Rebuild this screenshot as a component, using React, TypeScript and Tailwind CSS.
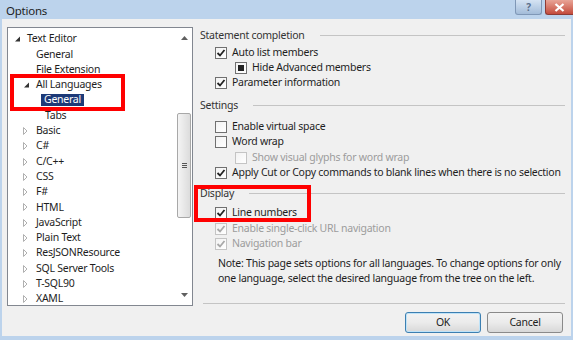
import React from 'react';

const font = "font-['Noto_Sans',sans-serif]";

type TreeNode = {
  label: string;
  pad: string;
  arrow?: 'open' | 'closed';
  selected?: boolean;
};

const tree: TreeNode[] = [
  { label: 'Text Editor', pad: 'pl-[6px]', arrow: 'open' },
  { label: 'General', pad: 'pl-[28px]' },
  { label: 'File Extension', pad: 'pl-[28px]' },
  { label: 'All Languages', pad: 'pl-[15px]', arrow: 'open' },
  { label: 'General', pad: 'pl-[33px]', selected: true },
  { label: 'Tabs', pad: 'pl-[37px]' },
  { label: 'Basic', pad: 'pl-[15px]', arrow: 'closed' },
  { label: 'C#', pad: 'pl-[15px]', arrow: 'closed' },
  { label: 'C/C++', pad: 'pl-[15px]', arrow: 'closed' },
  { label: 'CSS', pad: 'pl-[15px]', arrow: 'closed' },
  { label: 'F#', pad: 'pl-[15px]', arrow: 'closed' },
  { label: 'HTML', pad: 'pl-[15px]', arrow: 'closed' },
  { label: 'JavaScript', pad: 'pl-[15px]', arrow: 'closed' },
  { label: 'Plain Text', pad: 'pl-[15px]', arrow: 'closed' },
  { label: 'ResJSONResource', pad: 'pl-[15px]', arrow: 'closed' },
  { label: 'SQL Server Tools', pad: 'pl-[15px]', arrow: 'closed' },
  { label: 'T-SQL90', pad: 'pl-[15px]', arrow: 'closed' },
  { label: 'XAML', pad: 'pl-[15px]', arrow: 'closed' },
];

const Arrow = ({ kind }: { kind: 'open' | 'closed' }) =>
  kind === 'open' ? (
    <svg width="13" height="10" viewBox="0 0 13 10" className="shrink-0">
      <path d="M6 2.5 L6 7.5 L1 7.5 Z" fill="#333" />
    </svg>
  ) : (
    <svg width="13" height="10" viewBox="0 0 13 10" className="shrink-0">
      <path d="M0.5 1.5 L4 5 L0.5 8.5 Z" fill="none" stroke="#b0b0b0" strokeWidth="1" />
    </svg>
  );

const TreeRow = ({ node }: { node: TreeNode }) => (
  <div className={`h-[15.3px] flex items-center whitespace-nowrap ${node.pad}`}>
    {node.arrow && <Arrow kind={node.arrow} />}
    {node.selected ? (
      <span className="bg-[#1d3a78] text-white px-[3px] h-[12px] flex items-center">
        {node.label}
      </span>
    ) : (
      <span>{node.label}</span>
    )}
  </div>
);

type CheckState = 'checked' | 'unchecked' | 'square';

const Box = ({ state, disabled }: { state: CheckState; disabled?: boolean }) => (
  <div
    className={`w-[12px] h-[12px] shrink-0 border flex items-center justify-center bg-gradient-to-br from-[#f2f2f2] to-white ${
      disabled ? 'border-[#c4c4c4]' : 'border-[#707070]'
    }`}
  >
    {state === 'checked' && (
      <svg width="10" height="10" viewBox="0 0 10 10">
        <path
          d="M1.5 5 L4 7.5 L8.5 2"
          fill="none"
          stroke={disabled ? '#a8a8a8' : '#222'}
          strokeWidth="1.8"
        />
      </svg>
    )}
    {state === 'square' && <div className="w-[6px] h-[6px] bg-[#222]" />}
  </div>
);

const CheckRow = ({
  label,
  state,
  sub,
  disabled,
}: {
  label: string;
  state: CheckState;
  sub?: boolean;
  disabled?: boolean;
}) => (
  <div
    className={`h-[15px] flex items-center gap-[5px] ${sub ? 'pl-[35px]' : 'pl-[15px]'} ${
      disabled ? 'text-[#9c9c9c]' : 'text-[#1e1e1e]'
    }`}
  >
    <Box state={state} disabled={disabled} />
    <span className="whitespace-nowrap">{label}</span>
  </div>
);

const Header = ({ label, className = '' }: { label: string; className?: string }) => (
  <div className={`h-[15px] flex items-center ${className}`}>
    <span className="text-[#333] whitespace-nowrap">{label}</span>
    <div className="flex-1 ml-[15px] border-t border-[#c4c4c4]" />
  </div>
);

const Button = ({ label, focused }: { label: string; focused?: boolean }) => (
  <div
    className={`w-[76px] h-[21px] rounded-[3px] border flex items-center justify-center bg-gradient-to-b from-[#f3f3f3] via-[#ebebeb] to-[#d8d8d8] text-[#1e1e1e] ${
      focused ? 'border-[#3c7fb1] shadow-[inset_0_0_0_1px_#bfe3f8]' : 'border-[#8a8a8a]'
    }`}
  >
    {label}
  </div>
);

export default function App() {
  return (
    <div
      className={`w-[573px] h-[340px] bg-[#bcd3ec] flex flex-col overflow-hidden relative text-[10.5px] tracking-[-0.25px] ${font}`}
    >
      {/* Title bar */}
      <div className="h-[19px] flex items-start shrink-0">
        <div className="pl-[6px] pt-[2px] text-[11.5px] text-[#1e1e1e]">Options</div>
        <div className="ml-auto flex gap-[3px]">
          <div className="w-[27px] h-[15px] rounded-b-[3px] border border-t-0 border-[#7f97b6] bg-gradient-to-b from-[#d5e3f3] to-[#a3bcd9] flex items-center justify-center text-[10px] font-bold text-[#5a6f8c]">
            ?
          </div>
          <div className="w-[28px] h-[15px] rounded-bl-[3px] border border-t-0 border-r-0 border-[#8d3b35] bg-gradient-to-b from-[#e8a497] to-[#c34a3c] flex items-center justify-center">
            <svg width="11" height="9" viewBox="0 0 11 9">
              <path d="M1.5 1 L9.5 8 M9.5 1 L1.5 8" stroke="white" strokeWidth="2.2" />
            </svg>
          </div>
        </div>
      </div>

      {/* Body */}
      <div className="flex-1 mx-[2px] mb-[4px] bg-[#f0f0f0] flex flex-col">
        <div className="flex pt-[8px] pl-[5px] pr-[6px]">
          {/* Tree */}
          <div className="w-[186px] h-[279px] shrink-0 bg-white border border-[#828790] flex">
            <div className="flex-1 pt-[3.5px] text-[#1e1e1e]">
              {tree.map((n, i) => (
                <TreeRow key={i} node={n} />
              ))}
            </div>
            <div className="w-[16px] flex flex-col items-center">
              <div className="h-[12px] flex items-end justify-center">
                <svg width="7" height="4" viewBox="0 0 7 4">
                  <path d="M0 4 L3.5 0 L7 4 Z" fill="#606060" />
                </svg>
              </div>
              <div className="h-[73px]" />
              <div className="w-[14px] h-[105px] border border-[#a8a8a8] rounded-[2px] bg-gradient-to-r from-[#f4f4f4] to-[#dcdcdc] flex flex-col items-center justify-center gap-[1px]">
                <div className="w-[5px] border-t border-[#555]" />
                <div className="w-[5px] border-t border-[#555]" />
                <div className="w-[5px] border-t border-[#555]" />
              </div>
              <div className="flex-1" />
              <div className="h-[14px] flex items-start justify-center pt-[2px]">
                <svg width="7" height="4" viewBox="0 0 7 4">
                  <path d="M0 0 L7 0 L3.5 4 Z" fill="#606060" />
                </svg>
              </div>
            </div>
          </div>

          {/* Right pane */}
          <div className="flex-1 min-w-0 ml-[7px] h-[279px] pt-[1px] flex flex-col">
            <Header label="Statement completion" />
            <div className="mt-[2.5px]">
              <CheckRow label="Auto list members" state="checked" />
              <CheckRow label="Hide Advanced members" state="square" sub />
              <CheckRow label="Parameter information" state="checked" />
            </div>
            <Header label="Settings" className="mt-[7.5px]" />
            <div className="mt-[6px]">
              <CheckRow label="Enable virtual space" state="unchecked" />
              <CheckRow label="Word wrap" state="unchecked" />
              <div className="mt-[1px]">
                <CheckRow label="Show visual glyphs for word wrap" state="unchecked" sub disabled />
              </div>
              <CheckRow
                label="Apply Cut or Copy commands to blank lines when there is no selection"
                state="checked"
              />
            </div>
            <Header label="Display" className="mt-[6px]" />
            <div className="mt-[4px]">
              <CheckRow label="Line numbers" state="checked" />
              <div className="mt-[1px]">
                <CheckRow label="Enable single-click URL navigation" state="checked" disabled />
              </div>
              <CheckRow label="Navigation bar" state="checked" disabled />
            </div>
            <p className="mt-[5px] pl-[18px] leading-[15px] text-[#1e1e1e] whitespace-nowrap">
              Note: This page sets options for all languages. To change options for only
              <br />
              one language, select the desired language from the tree on the left.
            </p>
            <div className="mt-auto mb-[2px] ml-[3px] border-t border-[#c4c4c4]" />
          </div>
        </div>

        {/* Buttons */}
        <div className="flex justify-end gap-[6px] pr-[8px] pt-[6px]">
          <Button label="OK" focused />
          <Button label="Cancel" />
        </div>
      </div>

      {/* Highlight boxes */}
      <div className="absolute left-[10px] top-[74px] w-[115px] h-[37px] border-[4px] border-[#ff0000]" />
      <div className="absolute left-[194px] top-[185px] w-[117px] h-[37px] border-[4px] border-[#ff0000]" />
    </div>
  );
}
